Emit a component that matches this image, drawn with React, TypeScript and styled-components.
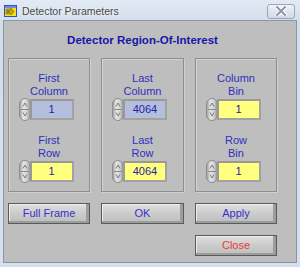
import React from "react";
import styled, { createGlobalStyle } from "styled-components";

const Global = createGlobalStyle`
  html, body { margin: 0; padding: 0; background: #ffffff; }
  body { font-family: "Liberation Sans", Arial, sans-serif; }
  * { box-sizing: border-box; }
`;

const Window = styled.div`
  width: 300px;
  height: 267px;
  display: flex;
  flex-direction: column;
  background: linear-gradient(#e2eaf4, #d3deec 22px, #d6e0ed);
`;

const TitleBar = styled.div`
  height: 20px;
  display: flex;
  align-items: center;
  padding: 0 4px 0 4px;
  gap: 5px;
`;

const Title = styled.span`
  flex: 1;
  font-family: "Liberation Sans", Arial, sans-serif;
  font-size: 10.5px;
  color: #4a4a4a;
  text-shadow: 0 0 4px #ffffff;
  padding-top: 2px;
`;

const CloseX = styled.div`
  width: 28px;
  height: 15px;
  margin-top: 2px;
  margin-right: 1px;
  border: 1px solid #9aa6b8;
  border-radius: 3px;
  background: linear-gradient(#f2f5fa, #dde4ee 50%, #d3dbe7);
  display: flex;
  align-items: center;
  justify-content: center;
`;

const Client = styled.div`
  flex: 1;
  margin: 0 3px 4px 3px;
  border: 1px solid #8a96a6;
  background: #bebebe;
  padding: 12px 0 0 4px;
  display: flex;
  flex-direction: column;
`;

const Content = styled.div`
  width: 269px;
  display: flex;
  flex-direction: column;
`;

const Heading = styled.div`
  text-align: center;
  font-weight: bold;
  font-size: 11.5px;
  line-height: 14px;
  color: #1616a8;
  margin-bottom: 11px;
`;

const Grid = styled.div`
  display: grid;
  grid-template-columns: 82px 83px 82px;
  column-gap: 11px;
  row-gap: 11px;
`;

const Panel = styled.div`
  height: 134px;
  border: 1px solid #8e8e8e;
  box-shadow: inset 1px 1px 0 #d4d4d4, 1px 1px 0 #d0d0d0;
  display: flex;
  flex-direction: column;
  align-items: center;
  padding: 13px 0 8px;
`;

const Label = styled.div`
  font-size: 11px;
  line-height: 13px;
  height: 26px;
  color: #3030c0;
  text-align: center;
`;

const Gap = styled.div`
  height: 13px;
`;

const FieldRow = styled.div`
  height: 23px;
  display: flex;
  align-items: center;
  margin-right: 6px;
`;

const Field = styled.div<{ $tone: "blue" | "yellow" }>`
  width: 44px;
  height: 21px;
  margin-left: -1px;
  border: 2px solid #a2a2a2;
  border-top-color: #999999;
  border-left-color: #999999;
  background: ${(p) => (p.$tone === "blue" ? "#b5bfdd" : "#ffff80")};
  font-size: 11px;
  line-height: 17px;
  text-align: center;
  color: #2424a0;
`;

const Button = styled.div<{ $danger?: boolean }>`
  height: 21px;
  border: 1px solid #5a5a5a;
  background: linear-gradient(#e0e0e0, #cdcdcd 45%, #bdbdbd);
  box-shadow: inset -3px -2px 0 #9c9c9c, inset 1px 1px 0 #efefef;
  display: flex;
  align-items: center;
  justify-content: center;
  font-size: 11px;
  color: ${(p) => (p.$danger ? "#e83a3a" : "#3a30c8")};
  padding-bottom: 1px;
`;

const Spinner = () => (
  <svg width="12" height="23" viewBox="0 0 12 23">
    <defs>
      <linearGradient id="sg" x1="0" y1="0" x2="1" y2="0">
        <stop offset="0" stopColor="#9a9a9a" />
        <stop offset="0.35" stopColor="#e6e6e6" />
        <stop offset="0.7" stopColor="#d0d0d0" />
        <stop offset="1" stopColor="#8a8a8a" />
      </linearGradient>
    </defs>
    <rect x="0.5" y="0.5" width="11" height="22" rx="5.5" fill="url(#sg)" stroke="#8c8c8c" />
    <line x1="2" y1="11.5" x2="10" y2="11.5" stroke="#8a8a8a" />
    <path d="M4 8.5 L6 5 L8 8.5" fill="none" stroke="#7a7a7a" />
    <path d="M4 14.5 L6 18 L8 14.5" fill="none" stroke="#7a7a7a" />
  </svg>
);

const AppIcon = () => (
  <svg width="13" height="12" viewBox="0 0 13 12" style={{ marginTop: 2 }}>
    <rect x="0.5" y="0.5" width="12" height="11" fill="#f4e21a" stroke="#2a4fd0" />
    <rect x="1" y="1" width="11" height="2" fill="#6d8de8" />
    <path d="M2 4 L7 4 L7 3 L10 6.5 L7 10 L7 9 L2 9 Z" fill="#d8a010" stroke="#7a5a00" strokeWidth="0.6" />
    <rect x="3" y="5.5" width="3" height="2" fill="#30a030" />
  </svg>
);

type FieldSpec = { label: [string, string]; value: string; tone: "blue" | "yellow" };

const columns: FieldSpec[][] = [
  [
    { label: ["First", "Column"], value: "1", tone: "blue" },
    { label: ["First", "Row"], value: "1", tone: "yellow" },
  ],
  [
    { label: ["Last", "Column"], value: "4064", tone: "blue" },
    { label: ["Last", "Row"], value: "4064", tone: "yellow" },
  ],
  [
    { label: ["Column", "Bin"], value: "1", tone: "yellow" },
    { label: ["Row", "Bin"], value: "1", tone: "yellow" },
  ],
];

const Control = ({ spec }: { spec: FieldSpec }) => (
  <>
    <Label>
      {spec.label[0]}
      <br />
      {spec.label[1]}
    </Label>
    <FieldRow>
      <Spinner />
      <Field $tone={spec.tone}>{spec.value}</Field>
    </FieldRow>
  </>
);

export default function App() {
  return (
    <>
      <Global />
      <Window>
        <TitleBar>
          <AppIcon />
          <Title>Detector Parameters</Title>
          <CloseX>
            <svg width="12" height="10" viewBox="0 0 12 10">
              <path d="M2 1 L10 9 M10 1 L2 9" stroke="#ffffff" strokeWidth="4" strokeLinecap="square" />
              <path d="M2 1 L10 9 M10 1 L2 9" stroke="#8d96a3" strokeWidth="2" strokeLinecap="square" />
            </svg>
          </CloseX>
        </TitleBar>
        <Client>
          <Content>
            <Heading>Detector Region-Of-Interest</Heading>
            <Grid>
              {columns.map((col, i) => (
                <Panel key={i}>
                  <Control spec={col[0]} />
                  <Gap />
                  <Control spec={col[1]} />
                </Panel>
              ))}
              <Button>Full Frame</Button>
              <Button>OK</Button>
              <Button>Apply</Button>
              <div />
              <div />
              <Button $danger>Close</Button>
            </Grid>
          </Content>
        </Client>
      </Window>
    </>
  );
}
